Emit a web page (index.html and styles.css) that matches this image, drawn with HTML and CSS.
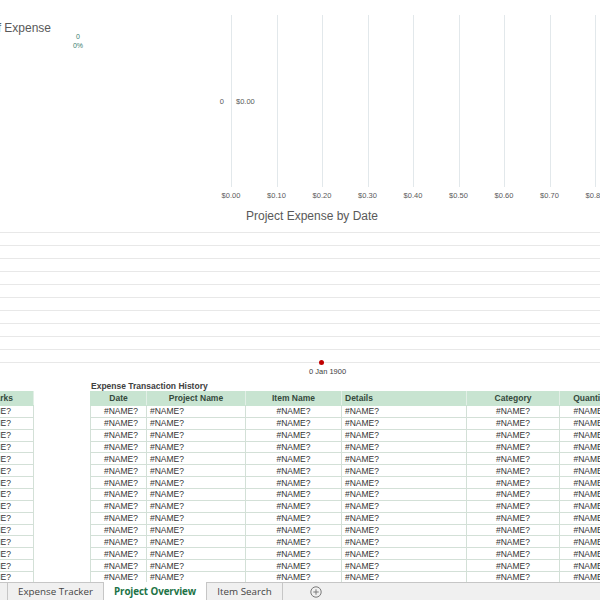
FILE: index.html
```html
<!DOCTYPE html>
<html lang="en">
<head>
    <meta charset="UTF-8">
    <meta name="viewport" content="width=device-width, initial-scale=1.0">
    <title>Project Overview</title>
    <link rel="stylesheet" href="styles.css">
</head>
<body>
    <div class="sheet">
        <section class="charts-top">
            <div class="pie-chart">
                <div class="pie-title"><span>Project Share of Expense</span></div>
                <div class="pie-label">0<br>0%</div>
            </div>
            <div class="bar-chart">
                <div class="bar-body">
                    <div class="bar-cat">0</div>
                    <div class="bar-plot">
                        <div class="bar-grid">
                            <span></span><span></span><span></span><span></span><span></span><span></span><span></span><span></span><span></span>
                        </div>
                        <span class="bar-value">$0.00</span>
                    </div>
                </div>
                <div class="bar-axis">
                    <span>$0.00</span><span>$0.10</span><span>$0.20</span><span>$0.30</span><span>$0.40</span><span>$0.50</span><span>$0.60</span><span>$0.70</span><span>$0.80</span>
                </div>
            </div>
        </section>

        <section class="line-chart">
            <h2 class="line-title">Project Expense by Date</h2>
            <div class="line-plot">
                <span class="line-dot"></span>
            </div>
            <div class="line-axis">0 Jan 1900</div>
        </section>

        <section class="tables">
            <div class="remarks">
                <table>
                    <thead><tr><th>Remarks</th></tr></thead>
                    <tbody>
                        <tr><td>#NAME?</td></tr>
                        <tr><td>#NAME?</td></tr>
                        <tr><td>#NAME?</td></tr>
                        <tr><td>#NAME?</td></tr>
                        <tr><td>#NAME?</td></tr>
                        <tr><td>#NAME?</td></tr>
                        <tr><td>#NAME?</td></tr>
                        <tr><td>#NAME?</td></tr>
                        <tr><td>#NAME?</td></tr>
                        <tr><td>#NAME?</td></tr>
                        <tr><td>#NAME?</td></tr>
                        <tr><td>#NAME?</td></tr>
                        <tr><td>#NAME?</td></tr>
                        <tr><td>#NAME?</td></tr>
                        <tr><td>#NAME?</td></tr>
                        <tr><td>#NAME?</td></tr>
                    </tbody>
                </table>
            </div>

            <div class="history">
                <div class="caption">Expense Transaction History</div>
                <table>
                    <colgroup>
                        <col class="c-date"><col class="c-project"><col class="c-item"><col class="c-details"><col class="c-category"><col class="c-qty">
                    </colgroup>
                    <thead>
                        <tr><th>Date</th><th>Project Name</th><th>Item Name</th><th class="left">Details</th><th>Category</th><th>Quantity</th></tr>
                    </thead>
                    <tbody>
                        <tr><td class="right">#NAME?</td><td class="left">#NAME?</td><td>#NAME?</td><td class="left">#NAME?</td><td>#NAME?</td><td>#NAME?</td></tr>
                        <tr><td class="right">#NAME?</td><td class="left">#NAME?</td><td>#NAME?</td><td class="left">#NAME?</td><td>#NAME?</td><td>#NAME?</td></tr>
                        <tr><td class="right">#NAME?</td><td class="left">#NAME?</td><td>#NAME?</td><td class="left">#NAME?</td><td>#NAME?</td><td>#NAME?</td></tr>
                        <tr><td class="right">#NAME?</td><td class="left">#NAME?</td><td>#NAME?</td><td class="left">#NAME?</td><td>#NAME?</td><td>#NAME?</td></tr>
                        <tr><td class="right">#NAME?</td><td class="left">#NAME?</td><td>#NAME?</td><td class="left">#NAME?</td><td>#NAME?</td><td>#NAME?</td></tr>
                        <tr><td class="right">#NAME?</td><td class="left">#NAME?</td><td>#NAME?</td><td class="left">#NAME?</td><td>#NAME?</td><td>#NAME?</td></tr>
                        <tr><td class="right">#NAME?</td><td class="left">#NAME?</td><td>#NAME?</td><td class="left">#NAME?</td><td>#NAME?</td><td>#NAME?</td></tr>
                        <tr><td class="right">#NAME?</td><td class="left">#NAME?</td><td>#NAME?</td><td class="left">#NAME?</td><td>#NAME?</td><td>#NAME?</td></tr>
                        <tr><td class="right">#NAME?</td><td class="left">#NAME?</td><td>#NAME?</td><td class="left">#NAME?</td><td>#NAME?</td><td>#NAME?</td></tr>
                        <tr><td class="right">#NAME?</td><td class="left">#NAME?</td><td>#NAME?</td><td class="left">#NAME?</td><td>#NAME?</td><td>#NAME?</td></tr>
                        <tr><td class="right">#NAME?</td><td class="left">#NAME?</td><td>#NAME?</td><td class="left">#NAME?</td><td>#NAME?</td><td>#NAME?</td></tr>
                        <tr><td class="right">#NAME?</td><td class="left">#NAME?</td><td>#NAME?</td><td class="left">#NAME?</td><td>#NAME?</td><td>#NAME?</td></tr>
                        <tr><td class="right">#NAME?</td><td class="left">#NAME?</td><td>#NAME?</td><td class="left">#NAME?</td><td>#NAME?</td><td>#NAME?</td></tr>
                        <tr><td class="right">#NAME?</td><td class="left">#NAME?</td><td>#NAME?</td><td class="left">#NAME?</td><td>#NAME?</td><td>#NAME?</td></tr>
                        <tr><td class="right">#NAME?</td><td class="left">#NAME?</td><td>#NAME?</td><td class="left">#NAME?</td><td>#NAME?</td><td>#NAME?</td></tr>
                        <tr><td class="right">#NAME?</td><td class="left">#NAME?</td><td>#NAME?</td><td class="left">#NAME?</td><td>#NAME?</td><td>#NAME?</td></tr>
                    </tbody>
                </table>
            </div>
        </section>

        <footer class="tabbar">
            <div class="tab-gap"></div>
            <div class="tab tab-expense">Expense Tracker</div>
            <div class="tab tab-project active">Project Overview</div>
            <div class="tab tab-search">Item Search</div>
            <div class="tab-add">
                <svg width="12" height="12" viewBox="0 0 12 12">
                    <circle cx="6" cy="6" r="5.2" fill="none" stroke="#7a7a7a" stroke-width="1"/>
                    <path d="M6 3.3v5.4M3.3 6h5.4" stroke="#7a7a7a" stroke-width="1"/>
                </svg>
            </div>
        </footer>
    </div>
</body>
</html>
```

FILE: styles.css
```css
body {
    margin: 0;
    font-family: "Liberation Sans", Arial, sans-serif;
    color: #333;
    background-color: white;
    overflow: hidden;
}
.sheet {
    width: 600px;
    height: 600px;
    display: flex;
    flex-direction: column;
    overflow: hidden;
}

/* top charts */
.charts-top {
    display: flex;
    height: 201px;
    flex-shrink: 0;
}
.pie-chart {
    width: 210px;
    flex-shrink: 0;
    padding-top: 21px;
    box-sizing: border-box;
}
.pie-title {
    width: 51px;
    display: flex;
    justify-content: flex-end;
    white-space: nowrap;
    font-size: 12px;
    line-height: 14px;
    color: #595959;
}
.pie-label {
    width: 14px;
    margin: -3px 0 0 71px;
    text-align: center;
    font-size: 7px;
    line-height: 9px;
    color: #3b7d6e;
}
.bar-chart {
    flex: 1;
    padding-top: 15px;
    min-width: 0;
    overflow: hidden;
}
.bar-body {
    display: flex;
    height: 172px;
}
.bar-cat {
    width: 21px;
    flex-shrink: 0;
    padding-right: 7px;
    box-sizing: border-box;
    display: flex;
    align-items: center;
    justify-content: flex-end;
    font-size: 7.5px;
    color: #595959;
}
.bar-plot {
    flex: 1;
    min-width: 0;
    overflow: hidden;
    display: grid;
    align-items: center;
}
.bar-grid,
.bar-value {
    grid-area: 1 / 1;
}
.bar-grid {
    display: flex;
    height: 100%;
}
.bar-grid span {
    width: 45.5px;
    flex-shrink: 0;
    border-left: 1px solid #e2e8eb;
    box-sizing: border-box;
}
.bar-value {
    padding-left: 5px;
    font-size: 7.5px;
    color: #595959;
}
.bar-axis {
    display: flex;
    margin: 4px 0 0 -1.75px;
}
.bar-axis span {
    width: 45.5px;
    flex-shrink: 0;
    text-align: center;
    font-size: 7.5px;
    line-height: 10px;
    color: #595959;
}

/* line chart */
.line-chart {
    flex-shrink: 0;
}
.line-title {
    margin: 8px 0 0;
    padding-left: 24px;
    font-size: 12px;
    line-height: 14px;
    font-weight: normal;
    text-align: center;
    color: #595959;
}
.line-plot {
    position: relative;
    margin-top: 9px;
    height: 131px;
    background: repeating-linear-gradient(to bottom, #e8e8e8 0 1px, transparent 1px 13px);
}
.line-dot {
    position: absolute;
    left: 318.5px;
    top: 127.5px;
    width: 5px;
    height: 5px;
    border-radius: 50%;
    background-color: #c00000;
}
.line-axis {
    margin-top: 3.5px;
    padding-left: 309px;
    font-size: 7.5px;
    line-height: 9px;
    color: #404040;
}

/* tables */
.tables {
    flex: 1;
    min-height: 0;
    display: flex;
    align-items: flex-start;
    margin-top: 5.5px;
    overflow: hidden;
}
.remarks {
    width: 34px;
    flex-shrink: 0;
    margin-top: 10px;
    overflow: hidden;
}
.remarks table {
    margin-left: -26px;
    width: 60px;
}
.remarks th,
.remarks td {
    text-align: left;
    padding-left: 2px;
}
.history {
    margin-left: 56px;
    flex-shrink: 0;
}
.caption {
    padding-left: 1px;
    font-size: 8.5px;
    line-height: 10px;
    font-weight: bold;
    color: #404040;
}
table {
    border-collapse: collapse;
    table-layout: fixed;
    font-size: 8.5px;
}
th {
    height: 13px;
    padding: 0 2px;
    background-color: #c8e4d1;
    color: #34493c;
    font-weight: bold;
    font-size: 8.5px;
    line-height: 13px;
    text-align: center;
    border: 1px solid #c8e4d1;
    border-right-color: #e2efe6;
}
td {
    height: 10.86px;
    padding: 0 2px;
    line-height: 10px;
    text-align: center;
    color: #333;
    white-space: nowrap;
    overflow: hidden;
    border: 1px solid #d3e0d7;
}
th.left,
td.left {
    text-align: left;
    padding-left: 3px;
}
td.right {
    text-align: right;
    padding-right: 8px;
}
.history table {
    width: 531px;
}
.c-date { width: 56px; }
.c-project { width: 99px; }
.c-item { width: 96px; }
.c-details { width: 125px; }
.c-category { width: 93px; }
.c-qty { width: 62px; }

/* sheet tabs */
.tabbar {
    height: 18px;
    flex-shrink: 0;
    display: flex;
    box-sizing: border-box;
    background-color: #f0f0f0;
    border-top: 1px solid #c6c6c6;
    font-family: "Open Sans", sans-serif;
    font-size: 9.8px;
    color: #444;
}
.tab-gap {
    width: 7px;
    border-right: 1px solid #c6c6c6;
}
.tab {
    display: flex;
    align-items: center;
    justify-content: center;
    box-sizing: border-box;
    border-right: 1px solid #c6c6c6;
    white-space: nowrap;
}
.tab-expense { width: 96px; }
.tab-project { width: 103px; }
.tab-search { width: 76px; }
.tab.active {
    margin-top: -1px;
    background-color: white;
    color: #217346;
    font-weight: bold;
    letter-spacing: -0.1px;
}
.tab-add {
    display: flex;
    align-items: center;
    margin-left: 27px;
}
```
